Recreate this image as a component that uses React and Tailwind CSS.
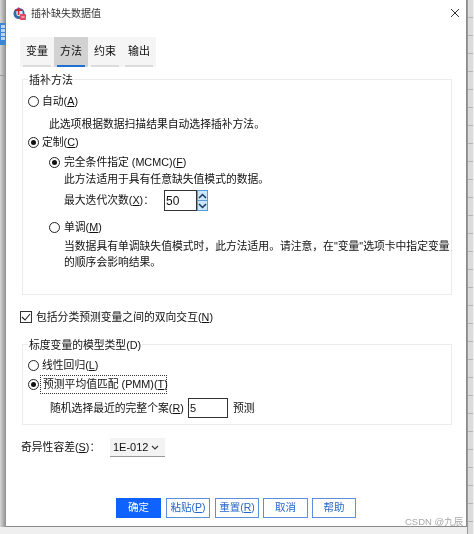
const font = { fontFamily: '"Liberation Sans","Noto Sans CJK SC",sans-serif' };

function U({ children }) {
  return <span className="underline">{children}</span>;
}

function Radio({ on }) {
  return (
    <span className="flex h-[11px] w-[11px] shrink-0 items-center justify-center rounded-full border border-[#222] bg-white">
      {on && <span className="h-[5px] w-[5px] rounded-full bg-[#111]" />}
    </span>
  );
}

function Tab({ label, active }) {
  return (
    <div className={`flex h-[30px] w-[34px] flex-col items-center ${active ? 'bg-[#d2d2d2]' : 'bg-[#f5f5f5]'}`}>
      <div className="flex h-[28px] items-center text-[11px] text-[#111]">{label}</div>
      <div className={`h-[2px] w-[28px] ${active ? 'bg-[#1f6fd0]' : 'bg-[#dcdcdc]'}`} />
    </div>
  );
}

function Btn({ children, w, primary, ml }) {
  return (
    <div
      className={`flex h-[20px] items-center justify-center text-[10.5px] ${w} ${ml} ${
        primary ? 'bg-[#0f62fe] text-white' : 'border border-[#5b8fd9] bg-white text-[#2566c8]'
      }`}
    >
      {children}
    </div>
  );
}

function LeftStrip() {
  return (
    <div className="flex h-full w-[6px] shrink-0 flex-col bg-gradient-to-r from-[#d8d8d8] to-[#8f8f8f]">
      <div className="h-[23px]" />
      <div className="flex h-[22px] flex-col gap-[1px] bg-[#3f86d0] px-[1px] py-[2px]">
        <div className="h-[3px] bg-[#b9d4ee]" />
        <div className="h-[3px] bg-[#b9d4ee]" />
        <div className="h-[3px] bg-[#b9d4ee]" />
        <div className="h-[3px] bg-[#b9d4ee]" />
      </div>
      <div className="h-[31px] border-b border-[#999]" />
      <div className="flex-1" />
      <div className="h-[7px] bg-[#efefef]" />
    </div>
  );
}

function RightStrip() {
  const rows = Array.from({ length: 29 });
  return (
    <div className="flex h-full w-[6px] shrink-0 flex-col overflow-hidden border-l border-[#9a9a9a] bg-[#dcdcdc]">
      {rows.map((_, i) => (
        <div key={i} className="h-[18px] shrink-0 border-b border-[#b4b4b4]" />
      ))}
    </div>
  );
}

function AppIcon() {
  return (
    <svg width="13" height="13" viewBox="0 0 14 14" className="shrink-0">
      <circle cx="6.5" cy="7" r="6" fill="#2f6ea8" />
      <circle cx="7" cy="6.5" r="3.5" fill="#d8e4ef" />
      <rect x="7.5" y="7.5" width="6.5" height="6.5" rx="1" fill="#e4465c" />
      <path d="M6 0.5v8M2 3.5h8" stroke="#d11f33" strokeWidth="1.6" />
      <path d="M9 10.8h3.5" stroke="#fff" strokeWidth="1" />
    </svg>
  );
}

function Chevron({ up }) {
  return (
    <svg width="9" height="6" viewBox="0 0 9 6">
      <path d={up ? 'M1 5l3.5-3.5L8 5' : 'M1 1l3.5 3.5L8 1'} fill="none" stroke="#163a66" strokeWidth="1.5" />
    </svg>
  );
}

export default function App() {
  return (
    <div className="relative flex h-[534px] w-[474px] overflow-hidden bg-[#efefef] text-[10.8px] text-[#111] blur-[0.35px]" style={font}>
      <LeftStrip />
      <div className="h-[527px] w-[461px] shrink-0 border-r border-b border-[#8a8a8a] bg-white">
        <div className="flex h-[26px] items-center pl-[7px] pr-[6px]">
          <AppIcon />
          <span className="ml-[5px] text-[10px] text-[#333]">插补缺失数据值</span>
          <svg width="10" height="10" viewBox="0 0 10 10" className="ml-auto">
            <path d="M1 1l8 8M9 1l-8 8" stroke="#333" strokeWidth="1" />
          </svg>
        </div>

        <div className="mt-[11px] flex pl-[14px]">
          <Tab label="变量" />
          <Tab label="方法" active />
          <Tab label="约束" />
          <Tab label="输出" />
        </div>

        <div className="relative ml-[16px] mt-[12px] h-[216px] w-[430px] border border-[#ebebeb] pl-[5px] pt-[13px]">
          <span className="absolute -top-[8px] left-[5px] bg-white px-[1px] text-[11px] leading-[16px]">插补方法</span>
          <div className="flex h-[16px] items-center gap-[3px]">
            <Radio /> <span>自动(<U>A</U>)</span>
          </div>
          <div className="mt-[7px] h-[16px] pl-[21px] leading-[16px]">此选项根据数据扫描结果自动选择插补方法。</div>
          <div className="mt-[2px] flex h-[16px] items-center gap-[3px]">
            <Radio on /> <span>定制(<U>C</U>)</span>
          </div>

          <div className="pl-[22px]">
            <div className="mt-[4px] flex h-[16px] items-center gap-[4px] -ml-[1px]">
              <Radio on /> <span>完全条件指定 (MCMC)(<U>F</U>)</span>
            </div>
            <div className="ml-[14px] mt-[1px] h-[16px] leading-[16px]">此方法适用于具有任意缺失值模式的数据。</div>
            <div className="ml-[14px] mt-[3px] flex h-[21px] items-center">
              <span className="w-[100px] whitespace-nowrap">最大迭代次数(<U>X</U>)：</span>
              <div className="flex h-[21px] w-[33px] items-center border border-[#333] pl-[1px] text-[12px]">50</div>
              <div className="flex h-[21px] w-[11px] flex-col">
                <div className="flex h-[11px] items-center justify-center border border-[#5a9bd8] bg-[#cfe5f8]">
                  <Chevron up />
                </div>
                <div className="-mt-[1px] flex h-[11px] items-center justify-center border border-[#5a9bd8] bg-[#cfe5f8]">
                  <Chevron />
                </div>
              </div>
            </div>
            <div className="mt-[8px] flex h-[16px] items-center gap-[4px] -ml-[1px]">
              <Radio /> <span>单调(<U>M</U>)</span>
            </div>
            <div className="ml-[14px] mt-[3px] whitespace-nowrap leading-[16px]">
              <div>当数据具有单调缺失值模式时，此方法适用。请注意，在"变量"选项卡中指定变量</div>
              <div>的顺序会影响结果。</div>
            </div>
          </div>
        </div>

        <div className="ml-[14px] mt-[16px] flex h-[12px] items-center gap-[4px]">
          <span className="flex h-[12px] w-[12px] items-center justify-center border border-[#333] bg-white">
            <svg width="10" height="10" viewBox="0 0 10 10">
              <path d="M1 5l3 3 5-6" fill="none" stroke="#222" strokeWidth="1.1" />
            </svg>
          </span>
          <span>包括分类预测变量之间的双向交互(<U>N</U>)</span>
        </div>

        <div className="relative ml-[16px] mt-[21px] h-[81px] w-[430px] border border-[#ebebeb] pl-[5px] pt-[12px]">
          <span className="absolute -top-[8px] left-[5px] bg-white px-[1px] leading-[16px]">标度变量的模型类型(D)</span>
          <div className="flex h-[16px] items-center gap-[3px]">
            <Radio /> <span>线性回归(<U>L</U>)</span>
          </div>
          <div className="mt-[2px] flex h-[19px] items-center">
            <Radio on />
            <span className="ml-[1px] flex h-[19px] w-[127px] items-center whitespace-nowrap border border-dotted border-[#333] pl-[2px]">
              预测平均值匹配 (PMM)(<U>T</U>)
            </span>
          </div>
          <div className="mt-[4px] flex h-[20px] items-center pl-[22px]">
            <span className="w-[138px] whitespace-nowrap">随机选择最近的完整个案(<U>R</U>)</span>
            <div className="flex h-[20px] w-[40px] items-center border border-[#333] pl-[1px] text-[11px]">5</div>
            <span className="ml-[5px]">预测</span>
          </div>
        </div>

        <div className="ml-[15px] mt-[13px] flex h-[19px] items-center">
          <span className="w-[89px] whitespace-nowrap">奇异性容差(<U>S</U>)：</span>
          <div className="flex h-[19px] w-[55px] items-center justify-between border-b border-[#999] bg-[#f3f3f3] pl-[3px] pr-[6px] text-[11px]">
            1E-012
            <svg width="8" height="5" viewBox="0 0 8 5">
              <path d="M1 1l3 3 3-3" fill="none" stroke="#333" strokeWidth="1.1" />
            </svg>
          </div>
        </div>

        <div className="ml-[110px] mt-[41px] flex">
          <Btn primary w="w-[45px]">确定</Btn>
          <Btn w="w-[44px]" ml="ml-[5px]">粘贴(<U>P</U>)</Btn>
          <Btn w="w-[44px]" ml="ml-[5px]">重置(<U>R</U>)</Btn>
          <Btn w="w-[45px]" ml="ml-[4px]">取消</Btn>
          <Btn w="w-[44px]" ml="ml-[4px]">帮助</Btn>
        </div>
      </div>
      <RightStrip />
      <span className="absolute left-[405px] top-[515px] text-[9.5px] leading-[14px] text-[#a8a8a8]">CSDN @九辰</span>
    </div>
  );
}
